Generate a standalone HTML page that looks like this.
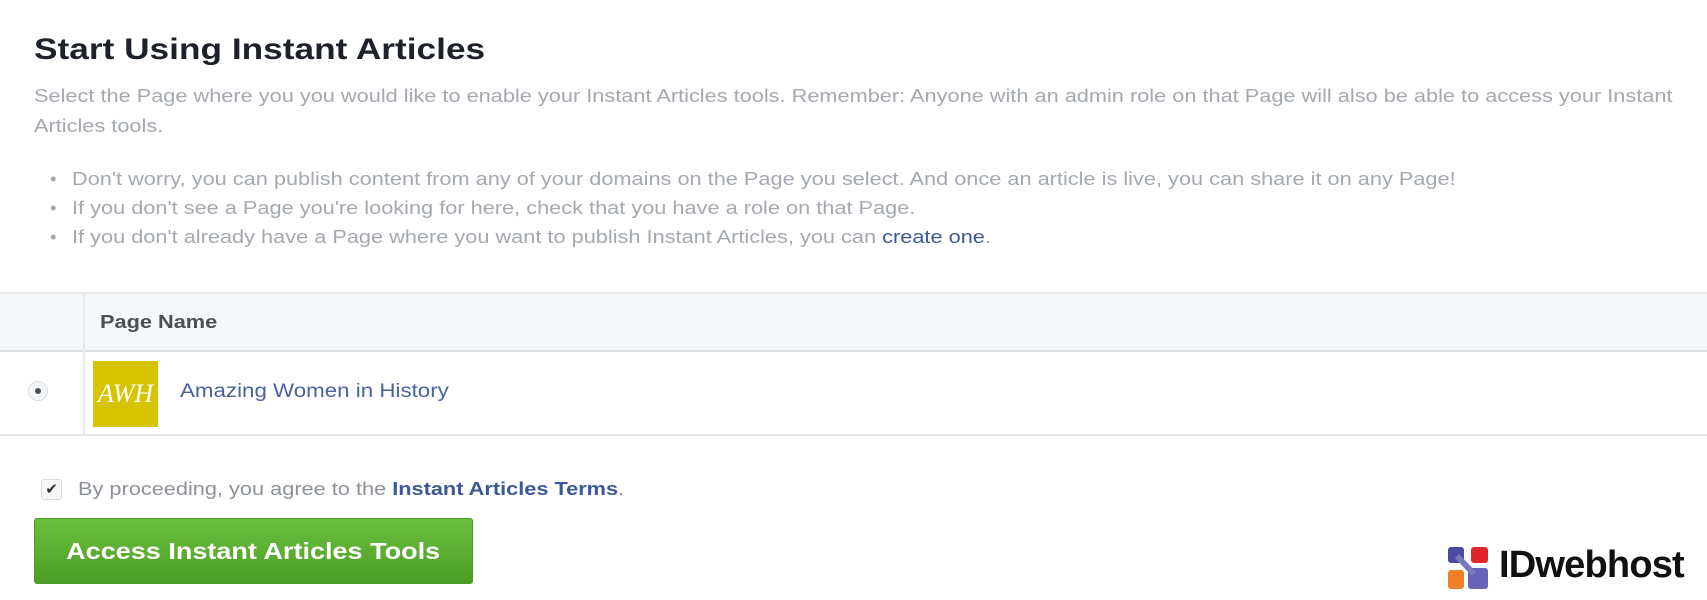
<!DOCTYPE html>
<html><head><meta charset="utf-8"><style>
body{margin:0;width:1707px;height:600px;background:#fff;font-family:"Liberation Sans",Arial,sans-serif;position:relative;overflow:hidden}
.a{position:absolute;white-space:nowrap}
.s{transform:scaleX(1.175);transform-origin:0 50%}
.g{color:#a4a8b0;font-size:18.5px}
.lnk{color:#3b5998}
</style></head><body>
<div class="a s" style="left:34px;top:33px;font-size:30px;font-weight:bold;color:#1d2129">Start Using Instant Articles</div>
<div class="a g s" style="left:34px;top:85px">Select the Page where you you would like to enable your Instant Articles tools. Remember: Anyone with an admin role on that Page will also be able to access your Instant</div>
<div class="a g s" style="left:34px;top:115px">Articles tools.</div>
<div class="a g" style="left:50px;top:168px">•</div><div class="a g s" style="left:72px;top:168px">Don't worry, you can publish content from any of your domains on the Page you select. And once an article is live, you can share it on any Page!</div>
<div class="a g" style="left:50px;top:197px">•</div><div class="a g s" style="left:72px;top:197px">If you don't see a Page you're looking for here, check that you have a role on that Page.</div>
<div class="a g" style="left:50px;top:226px">•</div><div class="a g s" style="left:72px;top:226px">If you don't already have a Page where you want to publish Instant Articles, you can <span class="lnk">create one</span>.</div>
<div class="a" style="left:0;top:292px;width:1707px;height:60px;background:#f6f7f9;border-top:2px solid #e9eaed;border-bottom:2px solid #dddfe2;box-sizing:border-box"></div>
<div class="a" style="left:83px;top:292px;width:2px;height:144px;background:#e9eaed"></div>
<div class="a" style="left:0;top:434px;width:1707px;height:2px;background:#e5e6e9"></div>
<div class="a s" style="left:100px;top:311px;font-size:18.5px;font-weight:bold;color:#4b4f56">Page Name</div>
<div class="a" style="left:28px;top:381px;width:20px;height:20px;border-radius:50%;background:#f5f6f7;border:1px solid #d8dade;box-sizing:border-box"></div>
<div class="a" style="left:35px;top:388px;width:6px;height:6px;border-radius:50%;background:#4b4f56"></div>
<div class="a" style="left:93px;top:361px;width:65px;height:66px;background:#d7c400;color:#fff;font-family:'Liberation Serif',serif;font-size:26px;line-height:66px;text-align:center;font-style:italic">AWH</div>
<div class="a s" style="left:180px;top:381px;font-size:19px;color:#4a62a0">Amazing Women in History</div>
<div class="a" style="left:41px;top:479px;width:21px;height:21px;border:1px solid #ddd;border-radius:3px;background:#f5f6f7;box-sizing:border-box;font-size:15px;line-height:19px;text-align:center;color:#333">✔</div>
<div class="a g s" style="left:78px;top:478px;color:#8d9199">By proceeding, you agree to the <b class="lnk">Instant Articles Terms</b>.</div>
<div class="a" style="left:34px;top:518px;width:439px;height:66px;background:linear-gradient(#6bbf3d,#4c9e25);border:1px solid #4a9a24;box-sizing:border-box;border-radius:3px;color:#fff;font-weight:bold;font-size:23px;line-height:64px;text-align:center"><span style="display:inline-block;transform:scaleX(1.175)">Access Instant Articles Tools</span></div>
<svg class="a" style="left:1447px;top:546px" width="42" height="44" viewBox="0 0 42 44">
<rect x="1" y="1" width="16" height="16" rx="3" fill="#4b4aa0"/>
<rect x="24" y="1" width="17" height="16" rx="3" fill="#e0242c"/>
<rect x="1" y="24" width="16" height="19" rx="3" fill="#f07f28"/>
<rect x="21" y="22" width="20" height="21" rx="3" fill="#6a63b8"/>
<path d="M10 10 L27 28" stroke="#7a78c0" stroke-width="6"/>
</svg>
<div class="a" style="left:1499px;top:544px;font-size:38px;font-weight:bold;color:#111;letter-spacing:-0.8px">IDwebhost</div>
</body></html>
